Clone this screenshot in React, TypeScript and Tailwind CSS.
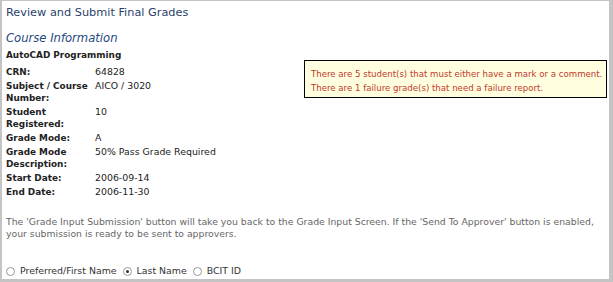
import React from "react";

const rows: { label: string; value: string }[] = [
  { label: "CRN:", value: "64828" },
  { label: "Subject / Course Number:", value: "AICO / 3020" },
  { label: "Student Registered:", value: "10" },
  { label: "Grade Mode:", value: "A" },
  { label: "Grade Mode Description:", value: "50% Pass Grade Required" },
  { label: "Start Date:", value: "2006-09-14" },
  { label: "End Date:", value: "2006-11-30" },
];

function Radio({ checked, label }: { checked?: boolean; label: string }) {
  return (
    <label className="flex items-center gap-[5px]">
      <span className="w-[9px] h-[9px] rounded-full border border-[#9a9a9a] bg-white flex items-center justify-center">
        {checked ? <span className="w-[3px] h-[3px] rounded-full bg-[#333]" /> : null}
      </span>
      <span>{label}</span>
    </label>
  );
}

export default function App() {
  return (
    <div
      className="w-[613px] h-[282px] bg-white border-t border-l-2 border-r-4 border-b-[3px] border-[#c4c4c4] overflow-hidden text-[#222]"
      style={{ fontFamily: '"DejaVu Sans", Verdana, sans-serif' }}
    >
      <div className="pl-[4px] pr-[2px]">
        <h1 className="text-[11.3px] text-[#2b3f6b] leading-[15px] pt-[4px]">Review and Submit Final Grades</h1>
        <div className="flex">
          <div className="w-[298px]">
            <h2 className="italic text-[11.6px] text-[#1f4880] leading-[15px] mt-[11px]">Course Information</h2>
            <div className="font-bold text-[8.9px] leading-[13px] mt-[3px]">AutoCAD Programming</div>
            <table className="text-[9.4px] leading-[12px] mt-[4px] border-separate border-spacing-0">
              <tbody>
                {rows.map((r) => (
                  <tr key={r.label}>
                    <td className="font-bold text-[8.9px] w-[89px] align-top pb-[2px] pr-0">{r.label}</td>
                    <td className="align-top pb-[2px]">{r.value}</td>
                  </tr>
                ))}
              </tbody>
            </table>
          </div>
          <div className="mt-[40px] w-[303px] h-[38px] border border-black bg-[#ffffe0] text-[#c0392b] text-[8.6px] leading-[14px] pl-[6px] pt-[6px] whitespace-nowrap">
            <div>There are 5 student(s) that must either have a mark or a comment.</div>
            <div>There are 1 failure grade(s) that need a failure report.</div>
          </div>
        </div>
        <div className="text-[9.3px] leading-[12px] text-[#666] mt-[16px] whitespace-nowrap">
          <div>
            The 'Grade Input Submission' button will take you back to the Grade Input Screen. If the 'Send To Approver' button is enabled,
          </div>
          <div>your submission is ready to be sent to approvers.</div>
        </div>
        <div className="flex gap-[6px] text-[9.4px] leading-[12px] text-[#333] mt-[25px]">
          <Radio label="Preferred/First Name" />
          <Radio checked label="Last Name" />
          <Radio label="BCIT ID" />
        </div>
      </div>
    </div>
  );
}
